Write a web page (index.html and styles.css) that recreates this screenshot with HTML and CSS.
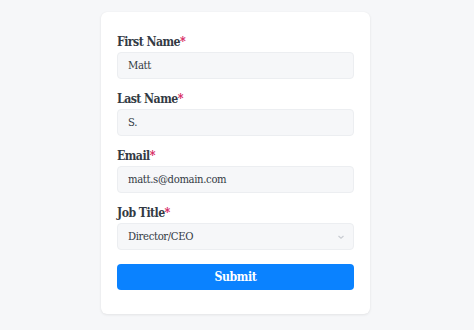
FILE: index.html
```html
<!DOCTYPE html>
<html>
<head>
<meta charset="utf-8">
<link rel="stylesheet" href="styles.css">
</head>
<body>
<div class="page">
  <form class="card">
    <div class="field">
      <label class="label">First Name<span class="req">*</span></label>
      <div class="input">Matt</div>
    </div>
    <div class="field">
      <label class="label">Last Name<span class="req">*</span></label>
      <div class="input">S.</div>
    </div>
    <div class="field">
      <label class="label">Email<span class="req">*</span></label>
      <div class="input">matt.s@domain.com</div>
    </div>
    <div class="field">
      <label class="label">Job Title<span class="req">*</span></label>
      <div class="input select">
        <span>Director/CEO</span>
        <svg class="chev" width="8" height="6" viewBox="0 0 8 6"><path d="M1.5 2 L4 4.3 L6.5 2" fill="none" stroke="#c9ccd2" stroke-width="1.2"/></svg>
      </div>
    </div>
    <div class="button">Submit</div>
  </form>
</div>
</body>
</html>
```
FILE: styles.css
```css
html, body {
  margin: 0;
  padding: 0;
  background: #f6f7f9;
  font-family: "DejaVu Serif Condensed", "DejaVu Serif", serif;
  font-stretch: condensed;
}
.page {
  width: 474px;
  height: 330px;
  display: flex;
  justify-content: center;
  padding-top: 12px;
  padding-right: 3px;
  box-sizing: border-box;
}
.card {
  width: 269px;
  box-sizing: border-box;
  background: #fff;
  border-radius: 6px;
  box-shadow: 0 1px 3px rgba(0,0,0,0.08), 0 0 1px rgba(0,0,0,0.06);
  padding: 22px 16px 24px 16px;
  display: flex;
  flex-direction: column;
  height: 302px;
}
.field {
  display: flex;
  flex-direction: column;
  margin-bottom: 12px;
}
.label {
  font-size: 12.2px;
  font-weight: bold;
  color: #333a44;
  line-height: 16px;
  margin-bottom: 2px;
  letter-spacing: -0.55px;
}
.req {
  color: #d6245e;
}
.input {
  height: 27px;
  box-sizing: border-box;
  background: #f6f7f9;
  border: 1px solid #eceef1;
  border-radius: 4px;
  padding: 0 10px;
  display: flex;
  align-items: center;
  font-size: 11.2px;
  color: #333a44;
  letter-spacing: -0.35px;
}
.select {
  justify-content: space-between;
  padding-right: 8px;
}
.button {
  margin-top: 2px;
  height: 27px;
  background: #0a82ff;
  border-radius: 4px;
  color: #fff;
  font-weight: bold;
  font-size: 12.2px;
  letter-spacing: -0.4px;
  display: flex;
  align-items: center;
  justify-content: center;
}
```
